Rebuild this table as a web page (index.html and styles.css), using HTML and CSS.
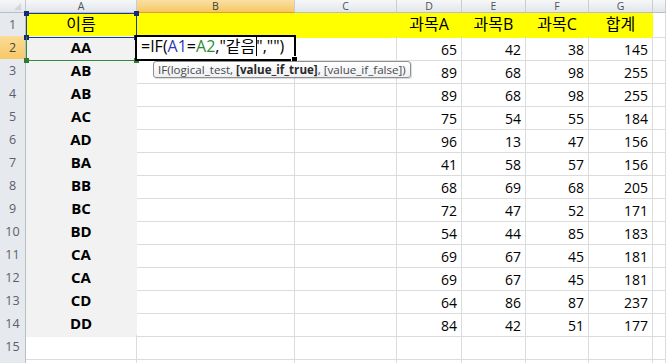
FILE: index.html
```html
<!DOCTYPE html>
<html lang="ko">
<head>
<meta charset="utf-8">
<title>Sheet</title>
<link rel="stylesheet" href="styles.css">
</head>
<body>
<div class="sheet">
  <div class="row hdr">
    <div class="corner"><span class="tri"></span></div>
    <div class="ch">A</div>
    <div class="ch sel">B</div>
    <div class="ch">C</div>
    <div class="ch">D</div>
    <div class="ch">E</div>
    <div class="ch">F</div>
    <div class="ch">G</div>
    <div class="ch"></div>
  </div>
  <div class="row">
    <div class="rh">1</div>
    <div class="c y ctr t16 pos">이름<div class="rng blue"><i class="k tl"></i><i class="k tr"></i><i class="k bl"></i><i class="k br"></i></div></div>
    <div class="c y"></div>
    <div class="c y"></div>
    <div class="c y ctr t16">과목A</div>
    <div class="c y ctr t16">과목B</div>
    <div class="c y ctr t16">과목C</div>
    <div class="c y ctr t16">합계</div>
    <div class="c"></div>
  </div>
  <div class="row">
    <div class="rh sel">2</div>
    <div class="c g b pos">AA<div class="rng green"><i class="k bl"></i><i class="k br"></i></div></div>
    <div class="c pos">
      <div class="editor">=IF(<span class="r1">A1</span>=<span class="r2">A2</span>,"같음<span class="caret"></span>","")<i class="handle"></i></div>
      <div class="tip">IF(logical_test, <b>[value_if_true]</b>, [value_if_false])</div>
    </div>
    <div class="c"></div>
    <div class="c n">65</div><div class="c n">42</div><div class="c n">38</div><div class="c n">145</div>
    <div class="c"></div>
  </div>
  <div class="row"><div class="rh">3</div><div class="c g b">AB</div><div class="c"></div><div class="c"></div><div class="c n">89</div><div class="c n">68</div><div class="c n">98</div><div class="c n">255</div><div class="c"></div></div>
  <div class="row"><div class="rh">4</div><div class="c g b">AB</div><div class="c"></div><div class="c"></div><div class="c n">89</div><div class="c n">68</div><div class="c n">98</div><div class="c n">255</div><div class="c"></div></div>
  <div class="row"><div class="rh">5</div><div class="c g b">AC</div><div class="c"></div><div class="c"></div><div class="c n">75</div><div class="c n">54</div><div class="c n">55</div><div class="c n">184</div><div class="c"></div></div>
  <div class="row"><div class="rh">6</div><div class="c g b">AD</div><div class="c"></div><div class="c"></div><div class="c n">96</div><div class="c n">13</div><div class="c n">47</div><div class="c n">156</div><div class="c"></div></div>
  <div class="row"><div class="rh">7</div><div class="c g b">BA</div><div class="c"></div><div class="c"></div><div class="c n">41</div><div class="c n">58</div><div class="c n">57</div><div class="c n">156</div><div class="c"></div></div>
  <div class="row"><div class="rh">8</div><div class="c g b">BB</div><div class="c"></div><div class="c"></div><div class="c n">68</div><div class="c n">69</div><div class="c n">68</div><div class="c n">205</div><div class="c"></div></div>
  <div class="row"><div class="rh">9</div><div class="c g b">BC</div><div class="c"></div><div class="c"></div><div class="c n">72</div><div class="c n">47</div><div class="c n">52</div><div class="c n">171</div><div class="c"></div></div>
  <div class="row"><div class="rh">10</div><div class="c g b">BD</div><div class="c"></div><div class="c"></div><div class="c n">54</div><div class="c n">44</div><div class="c n">85</div><div class="c n">183</div><div class="c"></div></div>
  <div class="row"><div class="rh">11</div><div class="c g b">CA</div><div class="c"></div><div class="c"></div><div class="c n">69</div><div class="c n">67</div><div class="c n">45</div><div class="c n">181</div><div class="c"></div></div>
  <div class="row"><div class="rh">12</div><div class="c g b">CA</div><div class="c"></div><div class="c"></div><div class="c n">69</div><div class="c n">67</div><div class="c n">45</div><div class="c n">181</div><div class="c"></div></div>
  <div class="row"><div class="rh">13</div><div class="c g b">CD</div><div class="c"></div><div class="c"></div><div class="c n">64</div><div class="c n">86</div><div class="c n">87</div><div class="c n">237</div><div class="c"></div></div>
  <div class="row"><div class="rh">14</div><div class="c g b">DD</div><div class="c"></div><div class="c"></div><div class="c n">84</div><div class="c n">42</div><div class="c n">51</div><div class="c n">177</div><div class="c"></div></div>
  <div class="row"><div class="rh">15</div><div class="c"></div><div class="c"></div><div class="c"></div><div class="c"></div><div class="c"></div><div class="c"></div><div class="c"></div><div class="c"></div></div>
  <div class="row"><div class="rh"></div><div class="c"></div><div class="c"></div><div class="c"></div><div class="c"></div><div class="c"></div><div class="c"></div><div class="c"></div><div class="c"></div></div>
</div>
</body>
</html>
```
FILE: styles.css
```css
html, body {
  margin: 0;
  padding: 0;
  background: #fff;
  overflow: hidden;
}
body {
  width: 666px;
  height: 363px;
  font-family: "Open Sans", "Noto Sans CJK KR", sans-serif;
  color: #000;
}
.sheet {
  display: flex;
  flex-direction: column;
  height: 363px;
  overflow: hidden;
}
.row {
  display: grid;
  grid-template-columns: 26px 111px 158px 102px 65px 64px 63px 64px 1fr;
  height: 23px;
  flex: none;
}
.row.hdr {
  height: 13px;
}
.row > div {
  box-sizing: border-box;
  min-width: 0;
}
.corner {
  position: relative;
  background: linear-gradient(#f5f6f8, #e4e7eb);
  border-right: 1px solid #c3c7cd;
  border-bottom: 1px solid #b9bec5;
}
.tri {
  position: absolute;
  right: 4px;
  bottom: 2px;
  width: 0;
  height: 0;
  border-left: 7px solid transparent;
  border-bottom: 7px solid #d2d5da;
}
.ch {
  background: linear-gradient(#f6f7f9, #e3e6ea);
  border-right: 1px solid #c9cdd2;
  border-bottom: 1px solid #b9bec5;
  color: #4e5258;
  font-size: 10.5px;
  line-height: 12px;
  text-align: center;
}
.ch.sel {
  background: linear-gradient(#fbe0a4, #f5c764);
  border-bottom-color: #e19a35;
  color: #3d3d3d;
}
.rh {
  background: #e6e9ed;
  border-right: 1px solid #b9bec5;
  border-bottom: 1px solid #cdd1d6;
  color: #5b6068;
  font-size: 12.5px;
  line-height: 24px;
  text-align: center;
}
.rh.sel {
  background: linear-gradient(#fbdc96, #f6c765);
  border-bottom-color: #e0a94c;
  color: #444;
}
.c {
  border-right: 1px solid #dadcdd;
  border-bottom: 1px solid #dadcdd;
  font-size: 14px;
  white-space: nowrap;
}
.pos {
  position: relative;
}
.y {
  background: #ffff00;
  border-color: #ffff00;
}
.g {
  background: #f2f2f2;
  border-color: #f2f2f2;
}
.ctr {
  text-align: center;
}
.t16 {
  font-size: 16px;
  line-height: 22px;
}
.b {
  font-weight: 700;
  font-size: 15px;
  line-height: 22px;
  text-align: center;
}
.n {
  text-align: right;
  padding: 5px 4px 0 0;
  line-height: 17px;
}
.rng {
  position: absolute;
  left: 0;
  top: 0;
  right: -1px;
  bottom: -1px;
  border: 1px solid;
  z-index: 3;
}
.rng.blue {
  border-color: #1c3a9c;
  color: #16287a;
}
.rng.green {
  border-color: transparent;
  border-bottom-color: #2f8a3a;
  border-left-color: #2f8a3a;
  color: #2f7a33;
}
.k {
  position: absolute;
  width: 5px;
  height: 5px;
  background: currentColor;
}
.k.tl { left: -3px; top: -3px; }
.k.tr { right: -3px; top: -3px; }
.k.bl { left: -3px; bottom: -3px; }
.k.br { right: -3px; bottom: -3px; }
.editor {
  position: absolute;
  left: -2px;
  top: -1px;
  right: -2px;
  bottom: -1px;
  border: 2px solid #000;
  background: #fff;
  padding-left: 4px;
  font-size: 16px;
  line-height: 19px;
  color: #000;
  z-index: 4;
  white-space: nowrap;
}
.r1 { color: #2c3bb5; }
.r2 { color: #2e8b35; }
.caret {
  display: inline-block;
  width: 1px;
  height: 19px;
  background: #000;
  vertical-align: -4px;
  margin: 0 -1px 0 1px;
}
.handle {
  position: absolute;
  right: -4px;
  bottom: -4px;
  width: 5px;
  height: 5px;
  background: #000;
  border: 1px solid #fff;
}
.tip {
  position: absolute;
  left: 16px;
  top: 25px;
  width: 258px;
  height: 17px;
  box-sizing: border-box;
  border: 1px solid #8f8f8f;
  border-radius: 3px;
  background: linear-gradient(#ffffff, #eef0f4);
  box-shadow: 1px 1px 1px rgba(0,0,0,0.15);
  color: #4a4a4a;
  font-size: 11.6px;
  line-height: 15px;
  padding-left: 4px;
  z-index: 5;
  white-space: nowrap;
}
.tip b {
  color: #2a2a2a;
  font-weight: 700;
}
```
